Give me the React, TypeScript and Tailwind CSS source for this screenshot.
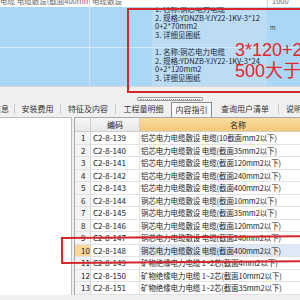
import React from 'react';

const rows: [string, string][] = [
  ['C2-8-139', '铝芯电力电缆敷设 电缆(10截面mm2以下)'],
  ['C2-8-140', '铝芯电力电缆敷设 电缆(截面35mm2以下)'],
  ['C2-8-141', '铝芯电力电缆敷设 电缆(截面120mm2以下)'],
  ['C2-8-142', '铝芯电力电缆敷设 电缆(截面240mm2以下)'],
  ['C2-8-143', '铝芯电力电缆敷设 电缆(截面400mm2以下)'],
  ['C2-8-144', '铜芯电力电缆敷设 电缆(截面10mm2以下)'],
  ['C2-8-145', '铜芯电力电缆敷设 电缆(截面35mm2以下)'],
  ['C2-8-146', '铜芯电力电缆敷设 电缆(截面120mm2以下)'],
  ['C2-8-147', '铜芯电力电缆敷设 电缆(截面240mm2以下)'],
  ['C2-8-148', '铜芯电力电缆敷设 电缆(截面400mm2以下)'],
  ['C2-8-149', '矿物绝缘电力电缆 1~2芯(截面4mm2以下)'],
  ['C2-8-150', '矿物绝缘电力电缆 1~2芯(截面10mm2以下)'],
  ['C2-8-151', '矿物绝缘电力电缆 1~2芯(截面35mm2以下)'],
];

const specs = [
  ['1. 名称:铜芯电力电缆', '2. 规格:YDNZB-YJY22-1KV-3*12', '0+2*70mm2', '3. 详细见图纸'],
  ['1. 名称:铜芯电力电缆', '2. 规格:YDNZB-YJY22-1KV-3*24', '0+2*120mm2', '3. 详细见图纸'],
];

function Sep() {
  return <div className="w-px h-[10px] self-center bg-[#c8c8c8] shrink-0" />;
}

export default function App() {
  return (
    <div className="relative w-[300px] h-[300px] overflow-hidden bg-[#f0f0f0] font-['Noto_Sans_CJK_SC',sans-serif] text-[#222]">
      {/* top partial row */}
      <div className="flex h-[7px] bg-white overflow-hidden text-[7.5px] leading-[9px] text-[#666]">
        <div className="w-[90px] shrink-0 overflow-hidden border-r border-[#d8d8d8]">
          <div className="-mt-[4px] whitespace-nowrap">电缆 电缆敷设(截面400mm2以下)</div>
        </div>
        <div className="w-[178px] shrink-0 overflow-hidden border-r border-[#d8d8d8] pl-[2px]">
          <div className="-mt-[4px] whitespace-nowrap">电缆敷设</div>
        </div>
        <div className="flex-1 overflow-hidden pl-[4px]">
          <div className="-mt-[4px] whitespace-nowrap">1000</div>
        </div>
      </div>

      {/* selected rows */}
      {specs.map((lines, i) => (
        <div
          key={i}
          className={`flex bg-[#aad7f5] ${i === 0 ? 'h-[41px] border-b border-[#d4eaf9]' : 'h-[38px]'}`}
        >
          <div className="w-[90px] shrink-0 border-r border-[#cbe5f7]" />
          <div className="w-[62px] shrink-0" />
          <div className="w-[115px] shrink-0 bg-[#bbdcf3] pl-[3px] text-[7.5px] leading-[8.5px] text-[#1e2a36] overflow-hidden">
            <div className={i === 0 ? '-mt-[2px]' : ''}>
              {lines.map((l, j) => (
                <div key={j} className="whitespace-nowrap">{l}</div>
              ))}
            </div>
          </div>
          <div className="flex-1 pl-[3px] pt-[17px] text-[6px] leading-[8px] text-[#333]">{i === 0 ? 'm' : ''}</div>
        </div>
      ))}

      {/* splitter */}
      <div className="h-[15px] border-t border-[#d8d8d8] pl-[137px] pt-[10px]">
        <div className="w-[66px] h-[4px] border border-[#9a9a9a] rounded-[1px] bg-[#f7f7f7] flex items-center px-[2px]">
          <div className="w-full border-t border-dotted border-[#9a9a9a]" />
        </div>
      </div>

      {/* tabs */}
      <div className="flex h-[16px] text-[8px] leading-[14px] text-[#333] whitespace-nowrap">
        <div className="w-[14px] shrink-0 overflow-hidden flex justify-end items-center pr-[5px]">
          <span>信息</span>
        </div>
        <Sep />
        <div className="w-[45px] shrink-0 flex items-center justify-center">安装费用</div>
        <Sep />
        <div className="w-[54px] shrink-0 flex items-center justify-center">特征及内容</div>
        <Sep />
        <div className="w-[55px] shrink-0 flex items-center justify-center">工程量明细</div>
        <div className="w-[41px] shrink-0 mt-[1px] border border-b-0 border-[#8c8c8c] bg-[#f8f8f8] flex items-center justify-center">内容指引</div>
        <div className="w-[66px] shrink-0 flex items-center justify-center">查询用户清单</div>
        <Sep />
        <div className="flex-1 flex items-center pl-[7px]">说明</div>
      </div>

      {/* main area */}
      <div className="flex h-[178px]">
        <div className="w-[72px] shrink-0 bg-white border-t border-r border-[#bdbdbd]" />
        <div className="w-[2px] shrink-0" />
        <div className="flex-1 bg-white border-t border-l border-[#a8a8a8] overflow-hidden text-[8px] leading-[12px]">
          <div className="flex h-[14px] border-b border-[#cfcfcf]">
            <div className="w-[16px] shrink-0 border-r border-[#d0d0d0] bg-gradient-to-b from-[#f6f6f6] to-[#e8e8e8]" />
            <div className="w-[49px] shrink-0 border-r border-[#d0d0d0] bg-gradient-to-b from-[#f6f6f6] to-[#e8e8e8] flex items-center justify-center">编码</div>
            <div className="w-[196px] shrink-0 bg-gradient-to-b from-[#fadc9f] to-[#f4c877] flex items-center justify-center">名称</div>
          </div>
          {rows.map(([code, name], i) => {
            const sel = i === 9;
            return (
              <div key={code} className="flex h-[12.5px] border-b border-[#e2e2e2] whitespace-nowrap">
                <div className={`w-[16px] shrink-0 border-r border-[#d6d6d6] pl-[6px] ${sel ? 'bg-[#fcd799]' : 'bg-[#f4f4f4]'}`}>{i + 1}</div>
                <div className="w-[49px] shrink-0 border-r border-[#e2e2e2] pl-[2px]">{code}</div>
                <div className={`w-[196px] shrink-0 pl-[1px] text-[7.5px] tracking-[-0.1px] ${sel ? 'bg-[#dde9f6]' : ''}`}>{name}</div>
              </div>
            );
          })}
        </div>
      </div>

      {/* annotations */}
      <div className="absolute left-[127px] top-[8px] w-[190px] h-[85px] border-2 border-[#d4262b]" />
      <div className="absolute left-[235px] top-[40px] whitespace-nowrap font-['Liberation_Sans','Noto_Sans_CJK_SC',sans-serif] text-[18px] leading-[21px] text-[#e5262a]">
        <div>3*120+2</div>
        <div>500大于</div>
      </div>
      <div className="absolute left-[61px] top-[236px] w-[260px] h-[27px] border-2 border-[#d4262b] -rotate-[0.4deg]" />
    </div>
  );
}
